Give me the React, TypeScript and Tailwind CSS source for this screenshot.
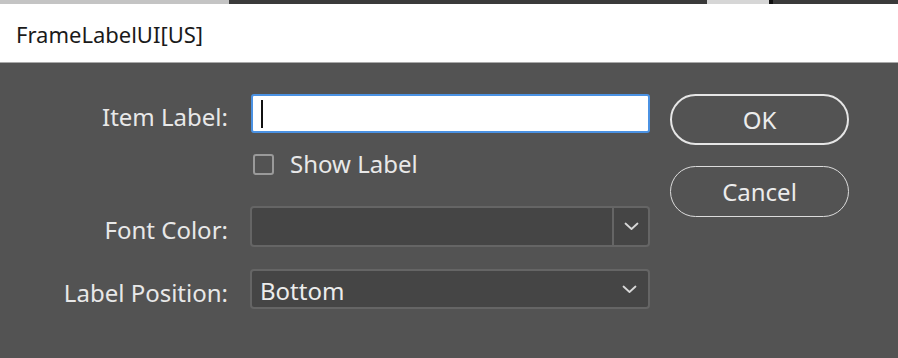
import React from 'react';

const font = { fontFamily: '"Noto Sans", "Open Sans", sans-serif' };

function Chevron() {
  return (
    <svg width="15" height="9" viewBox="0 0 15 9" fill="none">
      <path d="M1.5 1.5 L7.5 7 L13.5 1.5" stroke="#d8d8d8" strokeWidth="1.8" strokeLinecap="round" strokeLinejoin="round" />
    </svg>
  );
}

export default function App() {
  return (
    <div className="w-[898px] h-[358px] bg-[#535353] flex flex-col overflow-hidden" style={font}>
      {/* strip from the window behind */}
      <div className="h-[4px] flex shrink-0">
        <div className="w-[229px] bg-[#c4c4c4]" />
        <div className="w-[478px] bg-[#3a3a3a]" />
        <div className="w-[62px] bg-[#d6d6d6]" />
        <div className="w-[4px] bg-[#111111]" />
        <div className="flex-1 bg-[#3a3a3a]" />
      </div>

      {/* title bar */}
      <div className="h-[59px] shrink-0 bg-white border-b border-[#a9a9a9] flex items-center pl-[16px] pt-[2px]">
        <span className="text-[22px] text-[#1a1a1a] leading-none">FrameLabelUI[US]</span>
      </div>

      {/* body */}
      <div className="flex pt-[31px]">
        <div className="flex flex-col">
          <div className="flex items-center h-[39px]">
            <span className="w-[229px] text-right pr-[1px] text-[24px] text-[#e8e8e8] leading-none pt-[7px]">Item Label:</span>
            <div className="ml-[22px] w-[399px] h-[39px] bg-white border-2 border-[#4b92e3] rounded-[3px] flex items-center pl-[8px]">
              <div className="w-[2px] h-[28px] bg-[#111]" />
            </div>
          </div>

          <div className="flex items-center h-[24px] mt-[19px] ml-[253px]">
            <div className="w-[21px] h-[21px] border-2 border-[#9a9a9a] rounded-[3px]" />
            <span className="ml-[16px] text-[24px] text-[#e8e8e8] leading-none">Show Label</span>
          </div>

          <div className="flex items-center h-[41px] mt-[30px]">
            <span className="w-[229px] text-right pr-[1px] text-[24px] text-[#e8e8e8] leading-none pt-[7px]">Font Color:</span>
            <div className="ml-[21px] w-[400px] h-[41px] bg-[#454545] border-2 border-[#656565] rounded-[4px] flex">
              <div className="flex-1" />
              <div className="w-[36px] border-l-2 border-[#656565] flex items-center justify-center">
                <Chevron />
              </div>
            </div>
          </div>

          <div className="flex items-center h-[40px] mt-[22px]">
            <span className="w-[229px] text-right pr-[1px] text-[24px] text-[#e8e8e8] leading-none pt-[8px]">Label Position:</span>
            <div className="ml-[21px] w-[400px] h-[40px] bg-[#454545] border-2 border-[#656565] rounded-[4px] flex items-center pl-[8px] pr-[11px]">
              <span className="flex-1 text-[24px] text-[#ececec] leading-none pt-[3px]">Bottom</span>
              <Chevron />
            </div>
          </div>
        </div>

        <div className="ml-[20px] flex flex-col">
          <button className="w-[179px] h-[51px] rounded-full border-[2.5px] border-[#e6e6e6] text-[24px] text-[#ececec] leading-none" style={font}>
            OK
          </button>
          <button className="mt-[21px] w-[179px] h-[51px] rounded-full border-[1.5px] border-[#dcdcdc] text-[24px] text-[#ececec] leading-none" style={font}>
            Cancel
          </button>
        </div>
      </div>
    </div>
  );
}
